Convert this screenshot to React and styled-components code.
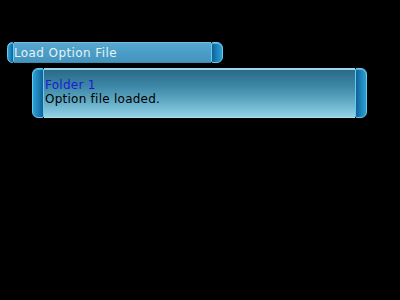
import React from "react";
import styled, { createGlobalStyle } from "styled-components";

const Global = createGlobalStyle`
  html, body { margin: 0; padding: 0; background: #000; }
  #root { width: 400px; height: 300px; background: #000; }
`;

const Screen = styled.div`
  width: 400px;
  height: 300px;
  background: #000;
  padding-top: 42px;
  box-sizing: border-box;
  display: flex;
  flex-direction: column;
  font-family: "DejaVu Sans", "Verdana", sans-serif;
`;

const Bar = styled.div`
  display: flex;
  align-items: stretch;
  margin-left: ${(p) => p.$left}px;
  margin-top: ${(p) => p.$top || 0}px;
  width: ${(p) => p.$width}px;
  height: ${(p) => p.$height}px;
`;

const Cap = styled.div`
  width: ${(p) => p.$w}px;
  flex: none;
  box-sizing: border-box;
  border: 1px solid #62cdf0;
  border-radius: ${(p) => (p.$side === "left" ? "6px 2px 2px 6px" : "2px 6px 6px 2px")};
  background: ${(p) =>
    p.$side === "left"
      ? "linear-gradient(90deg, #2aa0d4 0%, #1b7cb4 60%, #145f90 100%)"
      : "linear-gradient(90deg, #145f90 0%, #1b7cb4 40%, #2aa0d4 100%)"};
  box-shadow: inset 0 1px 0 rgba(160, 230, 255, 0.5);
`;

const TitleBody = styled.div`
  flex: 1;
  background: linear-gradient(180deg, #58a8cf 0%, #4a9dc6 50%, #4596bf 100%);
  border-top: 1px solid #74bede;
  border-bottom: 1px solid #3a8ab4;
  display: flex;
  align-items: center;
  color: #e4f2f8;
  font-size: 12px;
  letter-spacing: 0.4px;
`;

const DialogBody = styled.div`
  flex: 1;
  background: linear-gradient(180deg, #2a6b88 0%, #3d87a6 35%, #66aec8 70%, #92d2e6 100%);
  border-top: 2px solid #9cd6ea;
  border-bottom: 1px solid #a8e0f0;
  box-sizing: border-box;
  display: flex;
  flex-direction: column;
  padding-top: 8px;
  padding-left: 1px;
  font-size: 12px;
  line-height: 14px;
  letter-spacing: 0.25px;
`;

const Line = styled.div`
  color: ${(p) => p.$color};
`;

export default function App() {
  return (
    <>
      <Global />
      <Screen>
        <Bar $left={7} $width={216} $height={21}>
          <Cap $side="left" $w={7} />
          <TitleBody>Load Option File</TitleBody>
          <Cap $side="right" $w={12} />
        </Bar>
        <Bar $left={32} $top={5} $width={335} $height={50}>
          <Cap $side="left" $w={12} />
          <DialogBody>
            <Line $color="#1a1ad8">Folder 1</Line>
            <Line $color="#000">Option file loaded.</Line>
          </DialogBody>
          <Cap $side="right" $w={12} />
        </Bar>
      </Screen>
    </>
  );
}
